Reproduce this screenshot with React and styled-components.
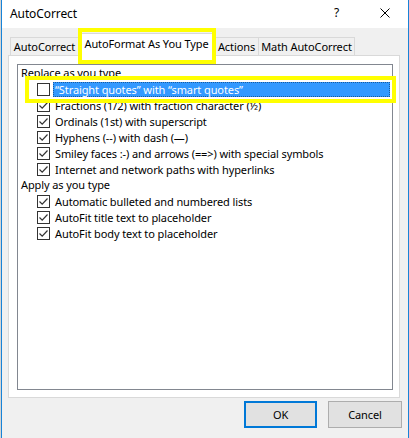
import React from "react";
import styled, { createGlobalStyle } from "styled-components";

const GlobalStyle = createGlobalStyle`
  body {
    margin: 0;
    background: #d4d4d4;
    font-family: "Noto Sans", "Open Sans", sans-serif;
    font-size: 11px;
    letter-spacing: -0.1px;
    color: #000;
  }
`;

const replaceItems = [
  { label: "\u201CStraight quotes\u201D with \u201Csmart quotes\u201D", checked: false, selected: true },
  { label: "Fractions (1/2) with fraction character (\u00BD)", checked: true },
  { label: "Ordinals (1st) with superscript", checked: true },
  { label: "Hyphens (--) with dash (\u2014)", checked: true },
  { label: "Smiley faces :-) and arrows (==>) with special symbols", checked: true },
  { label: "Internet and network paths with hyperlinks", checked: true },
];

const applyItems = [
  { label: "Automatic bulleted and numbered lists", checked: true },
  { label: "AutoFit title text to placeholder", checked: true },
  { label: "AutoFit body text to placeholder", checked: true },
];

function Check({ checked }) {
  return (
    <Box>
      {checked && (
        <svg width="11" height="11" viewBox="0 0 11 11">
          <path d="M1.5 5.5 L4.2 8.2 L9.5 2.5" fill="none" stroke="#333" strokeWidth="1.2" />
        </svg>
      )}
    </Box>
  );
}

function Item({ label, checked, selected }) {
  return (
    <Row>
      <Check checked={checked} />
      <Label $selected={selected}>{label}</Label>
      {selected && <Highlight $top={-5} $left={7} $width={371} $height={27} />}
    </Row>
  );
}

export default function App() {
  return (
    <>
      <GlobalStyle />
      <Window>
        <TitleBar>
          <Title>AutoCorrect</Title>
          <Help>?</Help>
          <Close>
            <svg width="10" height="10" viewBox="0 0 10 10">
              <path d="M0.5 0.5 L9.5 9.5 M9.5 0.5 L0.5 9.5" stroke="#000" strokeWidth="1" />
            </svg>
          </Close>
        </TitleBar>
        <Body>
          <TabStrip>
            <Tab $width={69}>AutoCorrect</Tab>
            <Tab $width={135} $active>
              AutoFormat As You Type
              <Highlight $top={-6} $left={-2} $width={138} $height={36} />
            </Tab>
            <Tab $width={45}>Actions</Tab>
            <Tab $width={97} $joined>Math AutoCorrect</Tab>
          </TabStrip>
          <Panel>
            <ListBox>
              <Section>Replace as you type</Section>
              {replaceItems.map((it) => (
                <Item key={it.label} {...it} />
              ))}
              <Section>Apply as you type</Section>
              {applyItems.map((it) => (
                <Item key={it.label} {...it} />
              ))}
            </ListBox>
          </Panel>
          <Footer>
            <Button $default $width={73}>OK</Button>
            <Button $width={74}>Cancel</Button>
          </Footer>
        </Body>
      </Window>
    </>
  );
}

const Window = styled.div`
  margin-left: 1px;
  width: 408px;
  height: 438px;
  box-sizing: border-box;
  border-left: 1px solid #1883d7;
  border-right: 1px solid #1883d7;
  background: #f0f0f0;
  display: flex;
  flex-direction: column;
  overflow: hidden;
`;

const TitleBar = styled.div`
  height: 28px;
  background: #fff;
  display: flex;
  align-items: center;
  padding-left: 8px;
  flex-shrink: 0;
`;

const Title = styled.div`
  flex: 1;
  font-size: 12px;
  margin-top: -1px;
`;

const Help = styled.div`
  width: 8px;
  font-size: 12px;
  margin-right: 38px;
  margin-top: -4px;
`;

const Close = styled.div`
  display: flex;
  margin-right: 18px;
  margin-top: -2px;
`;

const Body = styled.div`
  flex: 1;
  display: flex;
  flex-direction: column;
  padding: 0 8px 0 6px;
`;

const TabStrip = styled.div`
  height: 27px;
  display: flex;
  align-items: flex-end;
  padding-left: 2px;
`;

const Tab = styled.div`
  position: relative;
  box-sizing: border-box;
  width: ${(p) => p.$width}px;
  height: ${(p) => (p.$active ? 23 : 18)}px;
  margin-bottom: ${(p) => (p.$active ? -1 : 0)}px;
  margin-left: ${(p) => (p.$joined ? -1 : 0)}px;
  z-index: ${(p) => (p.$active ? 1 : 0)};
  border: 1px solid #d9d9d9;
  border-bottom: none;
  background: ${(p) => (p.$active ? "#fff" : "#f0f0f0")};
  display: flex;
  align-items: center;
  justify-content: center;
  white-space: nowrap;
  padding-bottom: ${(p) => (p.$active ? 3 : 0)}px;
  line-height: 16px;
`;

const Highlight = styled.div`
  position: absolute;
  top: ${(p) => p.$top}px;
  left: ${(p) => p.$left}px;
  width: ${(p) => p.$width}px;
  height: ${(p) => p.$height}px;
  box-sizing: border-box;
  border: 4px solid #ffff00;
  pointer-events: none;
  z-index: 2;
`;

const Panel = styled.div`
  box-sizing: border-box;
  height: 343px;
  border: 1px solid #d9d9d9;
  background: #fff;
  padding: 8px 6px 7px 8px;
  display: flex;
  flex-direction: column;
`;

const ListBox = styled.div`
  flex: 1;
  border: 1px solid #828790;
  background: #fff;
`;

const Section = styled.div`
  height: 16px;
  line-height: 16px;
  padding-left: 3px;
  white-space: nowrap;
`;

const Row = styled.div`
  position: relative;
  height: 16px;
  display: flex;
  align-items: center;
  padding-left: 19px;
`;

const Box = styled.div`
  box-sizing: border-box;
  width: 13px;
  height: 13px;
  border: 1px solid #333;
  background: #fff;
  display: flex;
  align-items: center;
  justify-content: center;
  flex-shrink: 0;
`;

const Label = styled.div`
  box-sizing: border-box;
  margin-left: 3px;
  height: 15px;
  line-height: 13px;
  padding-left: 1px;
  white-space: nowrap;
  border: 1px dotted ${(p) => (p.$selected ? "#1a5a9c" : "transparent")};
  background: ${(p) => (p.$selected ? "#3399ff" : "transparent")};
  color: ${(p) => (p.$selected ? "#fff" : "#000")};
  flex: ${(p) => (p.$selected ? 1 : "none")};
  margin-right: ${(p) => (p.$selected ? 2 : 0)}px;
`;

const Footer = styled.div`
  display: flex;
  justify-content: flex-end;
  gap: 11px;
  margin-top: 3px;
  margin-right: -2px;
`;

const Button = styled.div`
  box-sizing: border-box;
  width: ${(p) => p.$width}px;
  height: 27px;
  background: #e1e1e1;
  border: ${(p) => (p.$default ? "2px solid #0078d7" : "1px solid #adadad")};
  display: flex;
  align-items: center;
  justify-content: center;
`;
